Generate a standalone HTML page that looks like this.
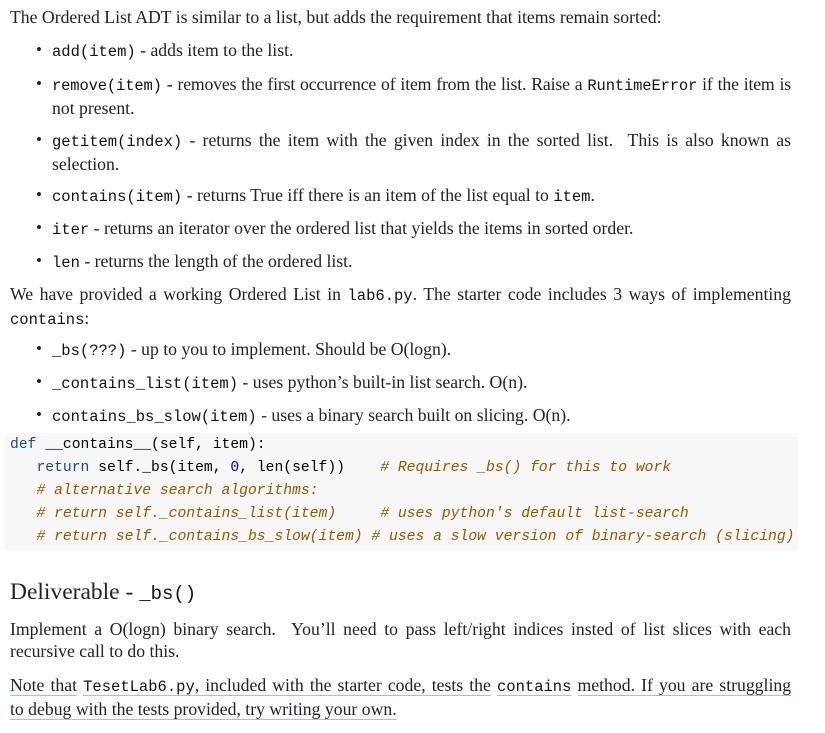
<!DOCTYPE html>
<html><head><meta charset="utf-8"><style>
body{margin:0;background:#fff;color:#222;font-family:"Liberation Serif",serif;font-size:17.7px;}
.w{position:absolute;left:10px;width:781px;}
p{margin:0;line-height:22px;text-align:justify;}
code{font-family:"Liberation Mono",monospace;font-size:15.5px;color:#111;}
ul{margin:0;padding:0;list-style:none;}
li{position:absolute;left:52px;width:739px;line-height:22px;text-align:justify;}
li:before{content:"•";position:absolute;left:-16px;font-size:17px;}
.j{display:block;text-align-last:justify;white-space:nowrap;}
.code{position:absolute;left:5px;top:433px;width:793px;height:117px;background:#f7f7f7;}
.code pre{margin:0;font-family:"Liberation Mono",monospace;font-size:14.7px;line-height:23px;padding:1px 0 0 5px;color:#000;}
.k{color:#204a87;}.c{color:#8f5902;font-style:italic;}.n{color:#0000cf;}
h2{position:absolute;left:10px;top:579px;margin:0;font-weight:normal;font-size:23.5px;}
u{text-decoration:none;border-bottom:1px solid #9ec3dc;}
</style></head><body>
<p class="w" style="top:6px">The Ordered List ADT is similar to a list, but adds the requirement that items remain sorted:</p>
<ul>
<li style="top:39px"><code>add(item)</code> - adds item to the list.</li>
<li style="top:73px"><span class="j" style="letter-spacing:-0.15px;word-spacing:-1px"><code>remove(item)</code> - removes the first occurrence of item from the list. Raise a <code>RuntimeError</code> if the item is</span>not present.</li>
<li style="top:129px"><code>getitem(index)</code> - returns the item with the given index in the sorted list. &nbsp;This is also known as selection.</li>
<li style="top:184px"><code>contains(item)</code> - returns True iff there is an item of the list equal to <code>item</code>.</li>
<li style="top:217px"><code>iter</code> - returns an iterator over the ordered list that yields the items in sorted order.</li>
<li style="top:250px"><code>len</code> - returns the length of the ordered list.</li>
</ul>
<p class="w" style="top:283px">We have provided a working Ordered List in <code>lab6.py</code>. The starter code includes 3 ways of implementing <code>contains</code>:</p>
<ul>
<li style="top:338px"><code>_bs(???)</code> - up to you to implement. Should be O(logn).</li>
<li style="top:371px"><code>_contains_list(item)</code> - uses python’s built-in list search. O(n).</li>
<li style="top:404px"><code>contains_bs_slow(item)</code> - uses a binary search built on slicing. O(n).</li>
</ul>
<div class="code"><pre><span class="k">def</span> __contains__(self, item):
   <span class="k">return</span> self._bs(item, <span class="n">0</span>, len(self))    <span class="c"># Requires _bs() for this to work</span>
   <span class="c"># alternative search algorithms:</span>
   <span class="c"># return self._contains_list(item)</span>     <span class="c"># uses python's default list-search</span>
   <span class="c"># return self._contains_bs_slow(item)</span> <span class="c"># uses a slow version of binary-search (slicing)</span></pre></div>
<h2>Deliverable - <code style="font-size:19px">_bs()</code></h2>
<p class="w" style="top:618px">Implement a O(logn) binary search. &nbsp;You’ll need to pass left/right indices insted of list slices with each recursive call to do this.</p>
<p class="w" style="top:674px"><span class="j"><u>Note that</u> <u><code>TesetLab6.py</code>, included with the starter code, tests the</u> <u><code>contains</code></u> <u>method. If you are struggling</u></span><u>to debug with the tests provided, try writing your own.</u></p>
</body></html>
